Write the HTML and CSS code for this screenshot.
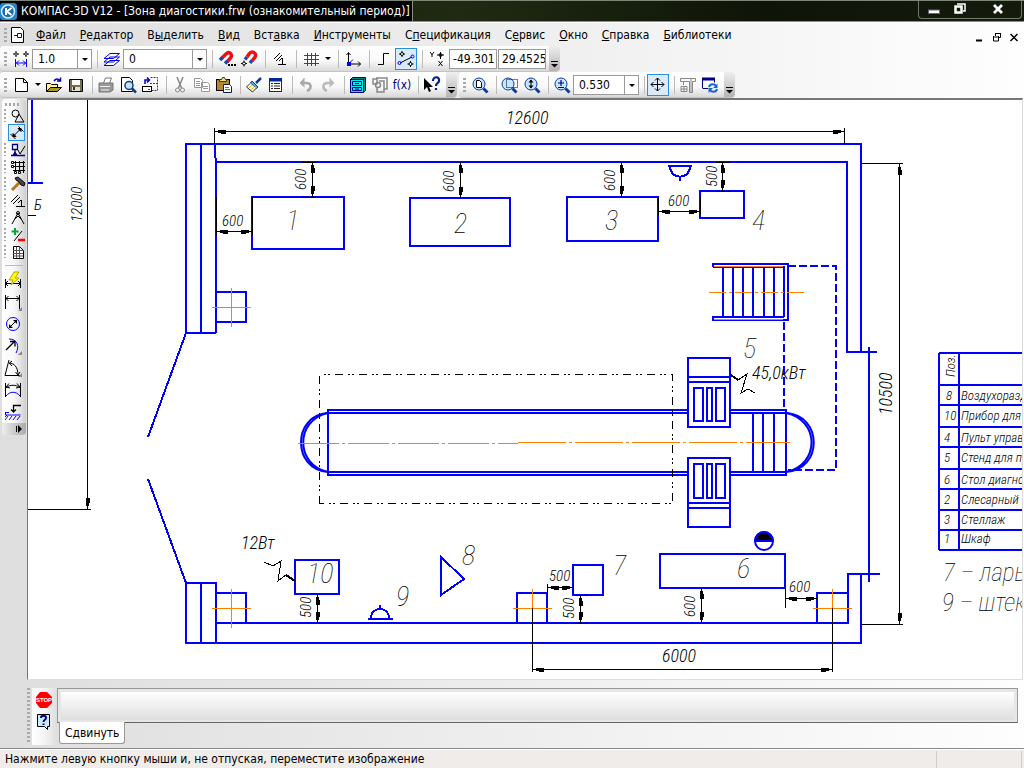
FILE: index.html
```html
<!DOCTYPE html>
<html lang="ru">
<head>
<meta charset="utf-8">
<title>КОМПАС-3D V12</title>
<link rel="stylesheet" href="styles.css">
</head>
<body>
<div class="app">
  <header class="titlebar">
    <div class="caption">
      <svg class="logo" width="17" height="17" viewBox="0 0 17 17"><rect width="17" height="17" rx="3" fill="#2484c6"/><circle cx="8" cy="8.500" r="6.500" fill="#1a6fb4" stroke="#d7efff" stroke-width="1.500"/><path d="M6 5v7M11.500 5L7 8.500l4.500 3.500" stroke="#fff" stroke-width="2" fill="none"/></svg>
      <h1>КОМПАС-3D V12 - [Зона диагостики.frw (ознакомительный период)]</h1>
    </div>
    <div class="winbtns">
      <button aria-label="Свернуть"><svg width="14" height="12"><rect x="1.500" y="7" width="11" height="3.500" fill="#fff" stroke="#667"/></svg></button>
      <button aria-label="Восстановить"><svg width="14" height="12"><path d="M4 1h8v7h-2" fill="none" stroke="#fff" stroke-width="1.500"/><rect x="2.500" y="3.500" width="6" height="6" fill="none" stroke="#fff" stroke-width="2.500"/></svg></button>
      <button aria-label="Закрыть"><svg width="14" height="12"><path d="M3 2l8 8M11 2l-8 8" stroke="#fff" stroke-width="2.800"/></svg></button>
    </div>
  </header>

  <nav class="menubar">
    <i class="grip"></i>
    <svg class="docicon" width="16" height="16" viewBox="0 0 16 16"><path d="M1.500 .5h9l3 3v12h-12z" fill="#fff" stroke="#000"/><path d="M4 8.500h3M7.500 6.500h4v4h-4z" fill="none" stroke="#00f"/></svg>
    <a href="#"><u>Ф</u>айл</a>
    <a href="#"><u>Р</u>едактор</a>
    <a href="#">В<u>ы</u>делить</a>
    <a href="#"><u>В</u>ид</a>
    <a href="#">Вст<u>а</u>вка</a>
    <a href="#"><u>И</u>нструменты</a>
    <a href="#">С<u>п</u>ецификация</a>
    <a href="#">С<u>е</u>рвис</a>
    <a href="#"><u>О</u>кно</a>
    <a href="#"><u>С</u>правка</a>
    <a href="#"><u>Б</u>иблиотеки</a>
    <div class="docbtns">
      <button aria-label="Свернуть документ"><svg width="10" height="10"><path d="M1 8.500h6" stroke="#000" stroke-width="2"/></svg></button>
      <button aria-label="Восстановить документ"><svg width="10" height="10"><path d="M3 1.500h6M3.500 1v3M8.500 1v4.500H6M1 5h6M1.500 4v5h5V4" fill="none" stroke="#000"/></svg></button>
      <button aria-label="Закрыть документ"><svg width="10" height="10"><path d="M1.500 2l7 7M8.500 2l-7 7" stroke="#000" stroke-width="1.500"/></svg></button>
    </div>
  </nav>

  <div class="bars">
    <div class="toolbar wide-sep">
      <i class="grip"></i>
      <button aria-label="Шаг курсора"><svg width="18" height="18"><path d="M1 4h6M4 1v6M11 4h6M14 1v6" stroke="#000"/><path d="M4 2.500L5.500 4 4 5.500 2.500 4zM14 2.500L15.500 4 14 5.500 12.500 4z" fill="#fff" stroke="#000"/><path d="M3.500 9v8M14.500 9v8M4 13h10M7 10.500L4.500 13 7 15.500M11 10.500l2.500 2.500-2.500 2.500" fill="none" stroke="#00f"/></svg></button>
      <span class="combo w60"><select aria-label="Шаг"><option>1.0</option></select><svg width="14" height="18"><path d="M4 8h6l-3 3z"/></svg></span>
      <i class="sep"></i>
      <button aria-label="Слои"><svg width="18" height="18" fill="#fff" stroke="#0000e0"><path d="M1 15.500h9.500l6-5H7zM1 12h9.500l6-5H7zM1 8.500h9.500l6-5H7z"/></svg></button>
      <span class="combo w84"><select aria-label="Слой"><option>0</option></select><svg width="14" height="18"><path d="M4 8h6l-3 3z"/></svg></span>
      <i class="sep"></i>
      <button aria-label="Привязки"><svg width="18" height="18"><path d="M4 8l4-4c3-3 7 0 4.500 4L9 12" fill="none" stroke="#e11" stroke-width="3.500"/><path d="M2 10l2.500-2.500M7 13.500l2.500-2.500" stroke="#1747b8" stroke-width="3.500"/><path d="M10 15h2m1 0h2m1 0h2" stroke="#000" stroke-width="2"/></svg></button>
      <button aria-label="Привязка"><svg width="18" height="18"><path d="M7 7l2-3c3-4 8-1 6 3l-3 4" fill="none" stroke="#e11" stroke-width="3.500"/><path d="M5 9.500L7 7M10 13l2-2.500" stroke="#1747b8" stroke-width="3.500"/><path d="M1 13.500h6M4 10.500v6" stroke="#000"/><circle cx="4" cy="13.500" r="1.500" fill="#fff" stroke="#000"/></svg></button>
      <i class="sep"></i>
      <button aria-label="Параллельность"><svg width="18" height="18" stroke="#000" fill="none"><path d="M3 9l6-6M5 11l6-6M7 14.500h8M11.500 14V8M8 11l3-3"/></svg></button>
      <i class="sep"></i>
      <button aria-label="Сетка"><svg width="18" height="18" stroke="#444"><path d="M5.500 3v13M9.500 3v13M13.500 3v13M2 5.500h15M2 9.500h15M2 13.500h15"/></svg></button>
      <button class="drop" aria-label="Параметры сетки"><svg width="8" height="8"><path d="M1 2h6L4 5z"/></svg></button>
      <i class="sep"></i>
      <button aria-label="Локальная СК"><svg width="18" height="18" fill="none"><path d="M4.500 3v11h12M2.500 5l2-2.500 2 2.500M14 11.500l2.500 2.500-2.500 2.500" stroke="#000"/><path d="M4.500 14L9 9.500" stroke="#00f"/><rect x="3" y="12" width="4" height="4" fill="#00f"/></svg></button>
      <i class="sep"></i>
      <button aria-label="Ортогонально"><svg width="18" height="18"><path d="M3 14.500h5.500v-11H14" fill="none" stroke="#000"/></svg></button>
      <button class="on" aria-label="Округление"><svg width="18" height="18" fill="none" stroke="#000"><path d="M5 1v6M2 4h6M13.500 11v6M10.500 14h6M3 13l12-6"/><circle cx="5" cy="4" r="1.500" fill="#fff"/><circle cx="13.500" cy="14" r="1.500" fill="#fff"/><circle cx="2.500" cy="13" r="1.500" stroke="#00f"/><circle cx="15.500" cy="6.500" r="1.500" stroke="#00f"/></svg></button>
      <i class="sep"></i>
      <button aria-label="Координаты"><svg width="18" height="18" stroke="#000" fill="none"><path d="M2 2l2 2.500L6 2M4 4v3M9 5h7M12.500 2v7M10.500 11l4 5M14.500 11l-4 5"/><circle cx="12.500" cy="5" r="1.500"/></svg></button>
      <input class="coord" aria-label="Y" value="-49.301"><input class="coord" aria-label="X" value="29.4525">
      <button class="cap" aria-label="Ещё"><svg width="8" height="8"><path d="M0 1.500h7" stroke="#000"/><path d="M0 4h7L3.500 7.500z"/></svg></button>
    </div>

    <div class="row">
    <div class="toolbar">
      <i class="grip"></i>
      <button aria-label="Создать"><svg width="18" height="18"><path d="M3.500 2.500h8l4 4v9h-12zM11.500 2.500v4h4" fill="#fff" stroke="#000"/></svg></button>
      <button class="drop" aria-label="Варианты"><svg width="8" height="8"><path d="M1 2h6L4 5z"/></svg></button>
      <button aria-label="Открыть"><svg width="18" height="18"><path d="M1.500 15.500v-8h4l1 1h6v3" fill="#ffef9c" stroke="#000"/><path d="M1.500 15.500l4-4h11l-4 4z" fill="#a69a20" stroke="#000"/><path d="M9 5c2-3 4-2.500 6-.5M15.500 1.500v3.500H12" fill="none" stroke="#00c" stroke-width="1.500"/></svg></button>
      <button aria-label="Сохранить"><svg width="18" height="18"><path d="M2.500 3.500h13v12h-13z" fill="#73724a" stroke="#000"/><rect x="5" y="4" width="8" height="5" fill="#fff"/><rect x="5" y="11" width="8" height="4" fill="#e4e0d0"/><rect x="6" y="11" width="2" height="3" fill="#333"/></svg></button>
      <i class="sep"></i>
      <button aria-label="Печать"><svg width="18" height="18"><path d="M6.500 7l2-5h6l-2 5" fill="#fff" stroke="#777"/><path d="M2 7h14v7l-3 2H2z" fill="#999" stroke="#777"/><path d="M3 10.500h10M4 14h8" stroke="#eee"/></svg></button>
      <button aria-label="Просмотр"><svg width="18" height="18"><path d="M2.500 1.500h8l3 3v11h-11z" fill="#fff" stroke="#000"/><circle cx="10" cy="9.500" r="4" fill="#bfe4ff" stroke="#123b8c" stroke-width="1.500"/><path d="M13 12.500l4 4" stroke="#123b8c" stroke-width="2.500"/></svg></button>
      <button aria-label="Импорт"><svg width="18" height="18" fill="none"><path d="M9.500 1.500h7v13h-7M9 7.500h8" stroke="#444" stroke-dasharray="2 1"/><rect x="1.500" y="10.500" width="9" height="5" fill="#fff" stroke="#000"/><path d="M4 8V4h4M6 1.500L8.500 4 6 6.500" stroke="#00c" stroke-width="1.500"/><path d="M7 13.500h2" stroke="#f00"/></svg></button>
      <i class="sep"></i>
      <button aria-label="Вырезать"><svg width="18" height="18" fill="none" stroke="#888"><path d="M6 1l4.500 11M12 1L7.500 12" stroke-width="1.500"/><circle cx="6.500" cy="14" r="2"/><circle cx="11.500" cy="14" r="2"/></svg></button>
      <button aria-label="Копировать"><svg width="18" height="18" fill="#fff" stroke="#999"><path d="M1.500 2.500h6l2 2v7h-8zM8.500 6.500h6l2 2v7h-8z"/><path d="M3 5.500h4M3 7.500h4M3 9.500h4M10 10.500h5M10 12.500h5"/></svg></button>
      <button aria-label="Вставить"><svg width="18" height="18"><rect x="1.500" y="3.500" width="13" height="11" fill="#b8862c" stroke="#000"/><path d="M4.500 5.500v-2h2l1-2h2l1 2h1v2z" fill="#eee06b" stroke="#333"/><path d="M8.500 8.500h6l2 2v6h-8z" fill="#fff" stroke="#123"/><path d="M10 11.500h4M10 13.500h5" stroke="#579"/></svg></button>
      <i class="sep"></i>
      <button aria-label="Копировать свойства"><svg width="18" height="18"><path d="M16 2l-5 5" stroke="#123b8c" stroke-width="2.500"/><path d="M7 5l6 6-1.500 1.500L5.500 7z" fill="#4caddf" stroke="#123b8c"/><path d="M5 7.500L1.500 11l6 5 4-4" fill="#fff7c2" stroke="#333"/><path d="M4 12l3-3M6 14l3-3" stroke="#d9b93c"/></svg></button>
      <button aria-label="Свойства"><svg width="18" height="18"><rect x="2.500" y="2.500" width="12" height="13" fill="#fff" stroke="#002a9a"/><path d="M2 4h13" stroke="#002a9a" stroke-width="3"/><path d="M4 7.500h2M4 10h2M4 12.500h2M7 7.500h6M7 10h6M7 12.500h6" stroke="#222"/></svg></button>
      <i class="sep"></i>
      <button aria-label="Отменить"><svg width="18" height="18" fill="none" stroke="#aaa" stroke-width="2.500"><path d="M4 7h5c6 0 6 6 1 8"/><path d="M7.500 2L3 7l4.500 4" fill="#aaa" stroke-width="1"/></svg></button>
      <button aria-label="Повторить"><svg width="18" height="18" fill="none" stroke="#bbb" stroke-width="2.500"><path d="M14 7H9c-6 0-6 6-1 8"/><path d="M10.500 2L15 7l-4.500 4" fill="#bbb" stroke-width="1"/></svg></button>
      <i class="sep"></i>
      <button aria-label="Менеджер библиотек"><svg width="18" height="18"><path d="M1.500 3.500l2-2h13v13l-2 2h-13z" fill="#088" stroke="#008"/><rect x="1.500" y="3.500" width="13" height="13" fill="#00e8f0" stroke="#008"/><path d="M3.500 5.500h9v4h-9zM3.500 11.500h9v3h-9zM6 7.500h4M6 13h4" fill="none" stroke="#008"/></svg></button>
      <button aria-label="Переменные"><svg width="18" height="18" fill="none" stroke="#888" stroke-width="1.500"><path d="M5 2h11v11h-3M8 5h5v11H6v-4M2 3h4v5H2z"/><circle cx="7" cy="9" r="2.500"/></svg></button>
      <button class="fx" aria-label="Функция">f(x)</button>
      <i class="sep"></i>
      <button aria-label="Справка"><svg width="20" height="20"><path d="M2 3v12l3-3 2 5 2-1-2-4h4z" fill="#000"/><path d="M11 6c0-5 7-5 6 0 0 2-3 2-3 5M14 13v2" fill="none" stroke="#0a1c96" stroke-width="2.200"/></svg></button>
      <button class="cap" aria-label="Ещё"><svg width="8" height="8"><path d="M0 1.500h7" stroke="#000"/><path d="M0 4h7L3.500 7.500z"/></svg></button>
    </div>
    <div class="toolbar">
      <i class="grip"></i>
      <button aria-label="Показать всё"><svg width="18" height="18"><circle cx="8" cy="8" r="6" fill="#c4e6ff" stroke="#123b9c"/><path d="M12.500 12.500l4 4" stroke="#123b9c" stroke-width="3"/><path d="M5.500 4.500h3l2 2v5h-5z" fill="#fff" stroke="#000"/></svg></button>
      <i class="sep"></i>
      <button aria-label="Увеличить рамкой"><svg width="18" height="18"><circle cx="7" cy="8" r="6" fill="#c4e6ff" stroke="#123b9c"/><path d="M11.500 12.500l4 4" stroke="#123b9c" stroke-width="3"/><rect x="5.500" y="3.500" width="11" height="8" fill="none" stroke="#000" stroke-dasharray="1 1"/></svg></button>
      <button aria-label="Масштаб"><svg width="18" height="18"><circle cx="8" cy="8" r="6" fill="#c4e6ff" stroke="#123b9c"/><path d="M12.500 12.500l4 4" stroke="#123b9c" stroke-width="3"/><path d="M8 4v8" stroke="#000"/><path d="M5.500 6.500h5L8 3.500zM5.500 9.500h5L8 12.500z"/></svg></button>
      <i class="sep"></i>
      <button aria-label="Увеличить"><svg width="18" height="18"><circle cx="8" cy="8" r="6" fill="#c4e6ff" stroke="#123b9c"/><path d="M12.500 12.500l4 4" stroke="#123b9c" stroke-width="3"/><path d="M5 7h6M8 4v6M5 11.500h6" stroke="#008" stroke-width="1.200"/></svg></button>
      <span class="combo w66"><select aria-label="Текущий масштаб"><option>0.530</option></select><svg width="14" height="18"><path d="M4 8h6l-3 3z"/></svg></span>
      <i class="sep"></i>
      <button class="on" aria-label="Сдвинуть"><svg width="18" height="18" fill="none" stroke="#000"><path d="M8.500 2v13M2 8.500h13M6 4.500l2.500-2.500L11 4.500M6 12.500L8.500 15l2.500-2.500M4.500 6L2 8.500 4.500 11M12.500 6L15 8.500 12.500 11"/></svg></button>
      <i class="sep"></i>
      <button aria-label="Перестроить"><svg width="18" height="18" fill="none" stroke="#888"><path d="M1.500 2.500h15v3h-3v11h-3v-11h-9zM4.500 5v4M2 10.500h6v5H2zM2 13h6M5 10v6M12 3v13"/></svg></button>
      <button aria-label="Обновить"><svg width="18" height="18" fill="none"><path d="M1.500 12.500v-10h12v4M2 12.500h5" stroke="#008"/><path d="M1 3h13" stroke="#008" stroke-width="3"/><path d="M8 11c1-4 6-3 7-1M16 13c-1 4-6 3-7 1" stroke="#1463e0" stroke-width="2"/><path d="M16.500 7.500V12H12zM7.500 17v-5H12z" fill="#1463e0"/></svg></button>
      <button class="cap" aria-label="Ещё"><svg width="8" height="8"><path d="M0 1.500h7" stroke="#000"/><path d="M0 4h7L3.500 7.500z"/></svg></button>
    </div>
    </div>
  </div>

  <main class="work">
    <aside class="side">
      <i class="hgrip"></i>
      <div class="modes">
        <button aria-label="Геометрия"><svg width="16" height="16" fill="none" stroke="#000"><circle cx="5.500" cy="5.500" r="3.500"/><path d="M9 6l5 8H5z"/></svg></button>
        <button class="on" aria-label="Размеры"><svg width="16" height="16" stroke="#000" fill="none"><path d="M4 11.500l8-8M1.500 9l5 5M9.500 1.500l5 5"/><path d="M4 11.500v-3l3 3zM12 3.500v3l-3-3z" fill="#000"/></svg></button>
        <button aria-label="Обозначения"><svg width="16" height="16" fill="none" stroke="#008" ><path d="M2.500 2.500h5v5h-5zM5 8v4M1 13.500h14" stroke-width="1.300"/><path d="M3 13l2-3 2 3z" fill="#008"/><path d="M8 8l2 4 5-8" stroke="#000"/></svg></button>
        <button aria-label="Параметризация"><svg width="16" height="16" fill="none" stroke="#000"><path d="M3 3.500h12M3 7.500h12M3 11.500h12M5.500 2v10M9.500 2v12M13.500 2v12"/><path d="M1.500 2.500h2v2h-2zM1.500 6.500h2v2h-2zM4.500 12.500h2v2h-2zM8.500 12.500h2v2h-2z" fill="#fff"/></svg></button>
        <button aria-label="Редактирование"><svg width="16" height="16"><path d="M2 14l8-8" stroke="#b87518" stroke-width="3"/><path d="M5 2l3-1 7 6-1 3-3-1-2-3-3-2z" fill="#444" stroke="#111"/></svg></button>
        <button aria-label="Параллельные"><svg width="16" height="16" fill="none" stroke="#000"><path d="M1 9l7-7M3 11l7-7M6 13.500h9M11.500 13V7M8 10l3-3"/></svg></button>
        <button aria-label="Измерения"><svg width="16" height="16" fill="none" stroke="#000"><path d="M2 14L8 3l6 11M5 9l3-3 3 3"/><circle cx="8" cy="3" r="1.500"/></svg></button>
        <button aria-label="Выделение"><svg width="16" height="16" fill="none"><path d="M5 1v7M1.500 4.500h7" stroke="#0a3" stroke-width="2"/><path d="M4 14l8-10" stroke="#000"/><path d="M8 13h7" stroke="#f00" stroke-width="2.500"/></svg></button>
        <button aria-label="Спецификация"><svg width="16" height="16" fill="#fff" stroke="#000"><path d="M3.500 2.500h6l4 4v8h-10z"/><path d="M3 6.500h10M3 9.500h10M3 12h10M6.500 3v11M9.500 3v11" stroke="#555"/></svg></button>
      </div>
      <i class="hsep"></i>
      <div class="tools">
        <button aria-label="Авторазмер"><svg width="18" height="18" fill="none" stroke="#000"><path d="M1.500 8v9M16.500 8v9M2 12.500h14M4 10l-2.500 2.500L4 15M14 10l2.500 2.500L14 15"/><path d="M10 1L5 9h4l-2 5 8-7h-4l4-6z" fill="#ff0" stroke="#b9a500"/></svg></button>
        <button aria-label="Линейный размер"><svg width="18" height="18" fill="none" stroke="#000"><path d="M1.500 2v14M15.500 2v14M2 5.500h13M4.500 3L2 5.500 4.500 8M12.500 3L15 5.500 12.500 8"/><path d="M14 18h4v-4z" fill="#888" stroke="none"/></svg></button>
        <button aria-label="Диаметральный размер"><svg width="18" height="18" fill="none"><circle cx="9" cy="9" r="6.500" stroke="#00f"/><path d="M5 13l8-8" stroke="#000"/><path d="M5 13v-4l4 4zM13 5v4l-4-4z" fill="#000"/></svg></button>
        <button aria-label="Радиальный размер"><svg width="18" height="18" fill="none"><path d="M5 2c8 0 11 7 7 14" stroke="#00f"/><path d="M2 13l8-8M6 4.500h5v5" stroke="#000" stroke-width="1.300"/><path d="M14 18h4v-4z" fill="#888"/></svg></button>
        <button aria-label="Угловой размер"><svg width="18" height="18" fill="none" stroke="#000"><path d="M5 1L1 16.500h16M5 4c5 0 9 4 9 12M8 2L5.500 4 8 7M11.500 13l2.500 3 2-3"/><path d="M14 18h4v-4z" fill="#888" stroke="none"/></svg></button>
        <button aria-label="Размер дуги"><svg width="18" height="18" fill="none" stroke="#000"><path d="M1.500 2v14M16.500 2v14M2 6.500c4-3 10-3 14 0M5 2.500L2 6l4 1M13 2.500L16 6l-4 1"/><path d="M2 15c4-5 10-5 14 0" stroke="#00f"/></svg></button>
        <button aria-label="Размер высоты"><svg width="18" height="18" fill="none"><path d="M17 2.500H9.500V9M7 6.500L9.500 9 12 6.500" stroke="#000" stroke-width="1.300"/><path d="M1.500 9v3h15M1 9.500h4M1 17l3-4M5 17l3-4M9 17l3-4M13 17l3-4M1 14l2-2" stroke="#00f"/></svg></button>
      </div>
      <button class="sidecap" aria-label="Развернуть"><svg width="8" height="8"><path d="M1.500 1v6" stroke="#000"/><path d="M3 0l4 4-4 4z"/></svg></button>
    </aside>

    <section class="canvas">
      <svg class="drawing" width="100%" height="100%">
        <defs>
          <marker id="a" markerUnits="userSpaceOnUse" markerWidth="12" markerHeight="6" refX="11" refY="3" orient="auto-start-reverse"><path d="M0 1L5 1L11 3L5 5L0 5z"/></marker>
        </defs>
        <g transform="translate(-28 -100)">
          <g class="blue">
            <path d="M216 333H186V144H861V352M201 144V333M215 144V154L216 162V333M216 162H847V352H877M869 347V582M880 574H848V623H216V583H186V643H861V574M201 583V643M216 623V643M28 183H43M32 100V184"/>
            <path d="M186 333L148 437M148 479L186 583"/>
            <path d="M216 292H246V322H216M216 593H246V623M517 623V593H547V623M817 623V593H847"/>
            <path d="M252 197H344V249H252zM410 198H510V246H410zM567 197H658V241H567zM700 191H744V218H700zM660 554H785V588H660zM573 565H603V595H573zM295 560H339V594H295zM441 557L464 579L441 595z"/>
            <path d="M668 166H692M670 167C671 180 689 180 690 167M680 176V181M368 619H393M371 618C371 606 389 606 389 618M380 605V609"/>
            <path d="M688 410H328V475H688M328 413H688M328 472H688M730 410H786V475H730M730 413H786M730 472H786M753 413V472M763 413V472M774 413V472"/>
            <path d="M688 358H730V427H688zM688 377H730M688 382H730M694 388H703V421H694zM707 388H712V421H707zM716 388H725V421H716zM688 458H730V527H688zM694 464H703V498H694zM707 464H712V498H707zM716 464H725V498H716zM688 503H730M688 508H730"/>
            <path d="M713 267V264H788V320H713V317H784M713 267H784V317M723 267V317M733 267V317M743 267V317M753 267V317M764 267V317M774 267V317"/>
            <path stroke-dasharray="8 3" d="M788 266H836V470H788M784 322V410"/>
            <path d="M939 353H1400M939 385H1400M939 405H1400M939 427H1400M939 447H1400M939 469H1400M939 489H1400M939 510H1400M939 530H1400M939 550H1400M939 353V550M959 353V550"/>
          </g>
          <g class="arc">
            <path d="M328 413C292 415 292 470 328 472M328 413C295 420 295 465 328 472M786 413C823 415 823 470 786 472M786 413C820 420 820 465 786 472"/>
            <path d="M755 541A9 9 0 0 1 773 541z" fill="#000"/><circle cx="764" cy="541" r="9"/>
          </g>
          <g class="orange">
            <path d="M212 307.500H251M231.500 288V327M212 608.500H251M231.500 589V628M513 608.500H552M532.500 589V608M813 608.500H852M832.500 589V608M714 266.500H783M714 319.500H783"/>
            <path stroke-dasharray="41 3 3 3" d="M298 443.500H518"/><path stroke-dasharray="48 3 3 3" d="M518 442.500H790"/><path stroke-dasharray="17 3 3 3" d="M709 292.500H806"/>
          </g>
          <path class="thin" stroke-dasharray="8 5 2 2 2 5" d="M319.500 503.500V374.500H672.500V503.500H319.500"/>
          <g class="thin">
            <path d="M214.500 128V144M844.500 128V144M861 163.500H903M861 624.500H903M532.500 608V672M832.500 608V672M28 509.500H91M28 215.500H36M216.500 197V235M252.500 197V235M302 162.500H316M302 197.500H316M658.500 197V215M700.500 197V215M716 162.500H730M716 191.500H730M785.500 588V608M547.500 584V595M573.500 584V595M575 595.500H588M575 623.500H588"/>
            <g marker-start="url(#a)" marker-end="url(#a)">
              <path d="M215 131.500H844"/><path d="M899.500 164V624"/><path d="M533 669.500H832"/>
              <path d="M312.500 162V197"/><path d="M460.500 162V198"/><path d="M621.500 162V197"/><path d="M722.500 162V191"/>
              <path d="M217 231.500H252"/><path d="M659 211.500H700"/><path d="M701.500 588V623"/><path d="M786 598.500H817"/><path d="M548 587.500H573"/><path d="M580.500 595V623"/><path d="M317.500 594V623"/>
            </g>
            <path marker-end="url(#a)" d="M87.500 100V509"/>
          </g>
          <g class="leader"><path d="M738 380L747 374L741 393L748 389L755 393M264 562L273 566L281 561L278 581L286 575"/><path stroke-width="2" d="M731 375L738 380M286 575L295 581"/></g>

          <g class="t18"><text x="506" y="124">12600</text><text x="662" y="662">6000</text><text x="752" y="379">45,0кВт</text><text x="241" y="549">12Вт</text><text transform="translate(892 415) rotate(-90)">10500</text></g>
          <g class="t15">
            <text x="222" y="226">600</text><text x="668" y="206">600</text><text x="789" y="592">600</text><text x="549" y="581">500</text><text x="34" y="210">Б</text>
            <text transform="translate(306 190) rotate(-90)">600</text><text transform="translate(454 192) rotate(-90)">600</text><text transform="translate(615 191) rotate(-90)">600</text><text transform="translate(717 187) rotate(-90)">500</text><text transform="translate(695 617) rotate(-90)">600</text><text transform="translate(574 619) rotate(-90)">500</text><text transform="translate(311 618) rotate(-90)">500</text><text transform="translate(82 222) rotate(-90)">12000</text>
          </g>
          <g class="t28">
            <text x="286" y="230">1</text><text x="454" y="233">2</text><text x="605" y="230">3</text><text x="752" y="230">4</text><text x="743" y="358">5</text><text x="737" y="578">6</text><text x="613" y="575">7</text><text x="462" y="565">8</text><text x="396" y="606">9</text><text x="307" y="583">10</text>
          </g>
          <g class="t25"><text x="943" y="581">7 – ларь</text><text x="942" y="611">9 – штекер</text></g>
          <g class="t13">
            <text transform="translate(955 377) rotate(-90)">Поз.</text>
            <text x="946" y="400">8</text><text x="961" y="400">Воздухораздаточная</text>
            <text x="944" y="420">10</text><text x="961" y="420">Прибор для проверки</text>
            <text x="944" y="442">4</text><text x="961" y="442">Пульт управления</text>
            <text x="944" y="462">5</text><text x="961" y="462">Стенд для проверки</text>
            <text x="944" y="484">6</text><text x="961" y="484">Стол диагноста</text>
            <text x="944" y="504">2</text><text x="961" y="504">Слесарный верстак</text>
            <text x="944" y="524">3</text><text x="961" y="524">Стеллаж</text>
            <text x="944" y="543">1</text><text x="961" y="543">Шкаф</text>
          </g>
        </g>
      </svg>
    </section>
  </main>

  <section class="props">
    <i class="grip"></i>
    <div class="actions">
      <button aria-label="Стоп"><svg width="18" height="18"><path d="M5 1h7l5 5v6l-5 5H5l-4-5V6z" fill="#f00"/><text x="9" y="11" text-anchor="middle" class="stop">STOP</text></svg></button>
      <button aria-label="Справка"><svg width="16" height="18"><path d="M1.500 1.500h12v12h-2v3l-3-3h-7z" fill="#cdeaff" stroke="#000"/><path d="M5 5c0-3 5-3 5 0 0 2-2.500 1.500-2.500 4M7.500 10.500v1.500" fill="none" stroke="#008" stroke-width="2"/></svg></button>
    </div>
    <div class="panel"><div class="field"><div class="fill"></div></div><button class="tab">Сдвинуть</button></div>
  </section>

  <footer class="status"><p>Нажмите левую кнопку мыши и, не отпуская, переместите изображение</p><span></span></footer>
</div>
</body>
</html>
```

FILE: styles.css
```css
* { box-sizing: border-box; }
body { margin: 0; font: 12px/16px "DejaVu Sans Condensed", "Noto Sans", sans-serif; color: #000; }
button { display: grid; place-items: center; padding: 0; border: 0; background: none; font: inherit; color: inherit; }
svg { display: block; }
.app { display: flex; flex-direction: column; height: 100vh; overflow: hidden; background: linear-gradient(90deg, #dedede, #fefefe); }

.titlebar { display: flex; justify-content: space-between; height: 22px; background: linear-gradient(90deg, #10180b, #202a12 45%, #0e1408 75%, #141a0c); border-top: 1px solid #7c8777; border-bottom: 1px solid #8b9085; }
.caption { display: flex; align-items: center; gap: 4px; padding-right: 2px; background: #000; border-right: 1px solid #889080; }
h1 { margin: 0; font-size: 12px; line-height: 18px; font-weight: normal; color: #fff; white-space: nowrap; }
.winbtns { display: flex; height: 18px; margin-right: 2px; padding: 0 16px 2px 8px; gap: 12px; border: 1px solid #70786b; border-top: 0; border-radius: 0 0 4px 4px; }
.winbtns button:last-child { margin-left: 12px; }

.menubar { display: flex; align-items: center; gap: 14px; height: 24px; flex: none; padding: 0 4px; border-top: 1px solid #fff; }
.menubar .grip { margin-right: -11px; }
.docicon { margin-right: -4px; }
.menubar a { color: #000; text-decoration: none; white-space: nowrap; }
.docbtns { display: flex; gap: 7px; margin-left: auto; padding: 4px 1px 0 0; }

.grip { flex: none; width: 3px; height: 14px; background: repeating-linear-gradient(#a9a9a9 0 2px, transparent 2px 4px); }
.bars { flex: none; }
.row { display: flex; gap: 2px; }
.toolbar { display: flex; align-items: center; width: max-content; height: 26px; padding-left: 4px; border-radius: 4px; background: linear-gradient(#fff, #f8f8f8 60%, #d9d9d9); border-bottom: 1px solid #c4c4c4; --sep: 8px; }
.wide-sep { --sep: 9px; }
.toolbar .grip { margin-right: 3px; }
.toolbar > button { width: 22px; height: 22px; }
.toolbar > .drop { width: 11px; }
.sep { flex: none; width: var(--sep); height: 18px; background: linear-gradient(#bbb, #bbb) 5px 0 / 1px 100% no-repeat; }
.toolbar > .on, .modes .on { background: #d9ebfb; border: 1px solid #2b8de0; }
.toolbar > .cap { width: 11px; height: 25px; margin-left: 3px; place-items: end center; padding-bottom: 3px; border-radius: 0 4px 4px 0; background: linear-gradient(#eee, #b4b4b4); }
.toolbar > .fx { color: #00007c; }
.combo { display: grid; height: 20px; border: 1px solid #9a9a9a; background: #fff; }
.combo > * { grid-area: 1 / 1; }
.combo select { appearance: none; width: 100%; height: 18px; border: 0; padding: 0 5px; background: none; font: 12px/18px "DejaVu Sans Condensed", "Noto Sans", sans-serif; color: #000; }
.combo svg { justify-self: end; border-left: 1px solid #9a9a9a; pointer-events: none; }
.w60 { width: 60px; }
.w66 { width: 66px; }
.w84 { width: 84px; }
.coord { width: 48px; height: 20px; margin-left: 1px; padding: 0 0 0 3px; border: 1px solid #9a9a9a; background: #fff; font: 12px/18px "DejaVu Sans Condensed", "Noto Sans", sans-serif; color: #000; }

.work { display: flex; flex: 1; min-height: 0; padding-bottom: 4px; }
.side { flex: none; width: 24px; margin: 1px 1px 0 2px; align-self: flex-start; border-radius: 4px; background: linear-gradient(90deg, #fff, #f8f8f8 50%, #cfcfcf); }
.hgrip { display: block; width: 15px; height: 3px; margin: 4px 3px 1px; background: repeating-linear-gradient(90deg, #a9a9a9 0 2px, transparent 2px 4px); }
.modes { padding-left: 2px; }
.modes button { width: 22px; height: 17px; padding-left: 5px; background: repeating-linear-gradient(#a9a9a9 0 2px, transparent 2px 4px) 0 2px / 2px 13px no-repeat; }
.modes .on { width: 17px; margin-left: 4px; padding: 0; background: #d9ebfb; }
.hsep { display: block; height: 1px; margin: 5px 3px 3px; background: #bbb; }
.tools button { width: 22px; height: 22px; }
.sidecap { width: 24px; height: 12px; place-items: center end; padding-right: 3px; background: linear-gradient(90deg, #eee, #aaa); border-radius: 0 0 4px 4px; }
.canvas { flex: 1; min-width: 0; margin-right: 1px; background: #fff; border: 1px solid #dedede; border-top: 2px solid #777; border-left-color: #777; overflow: hidden; }

.drawing { shape-rendering: crispEdges; fill: none; }
.blue, .arc { stroke: #00f; stroke-width: 2; }
.arc { shape-rendering: auto; }
.orange { stroke: #ff8000; stroke-width: 1; }
.thin, .leader { stroke: #000; stroke-width: 1; }
marker path { fill: #000; stroke: none; }
.drawing text { fill: #000; font-family: "Liberation Sans Narrow", "Roboto Condensed", "Liberation Sans", sans-serif; font-style: italic; font-weight: 300; }
.t13 text { font-size: 13px; }
.t15 text { font-size: 15px; }
.t18 text { font-size: 18px; }
.t25 text { font-size: 25px; font-weight: 100; }
.t28 text { font-size: 28px; font-weight: 100; }

.props { display: flex; flex: none; height: 64px; padding: 4px 6px 3px 27px; }
.props .grip { height: 54px; margin-right: 2px; }
.actions { width: 25px; padding-top: 1px; background: linear-gradient(90deg, #fff, #f4f4f4 50%, #ddd); }
.actions button { width: 24px; height: 22px; }
.stop { font: bold 6px "Liberation Sans", sans-serif; fill: #fff; }
.panel { flex: 1; }
.field { height: 35px; padding: 3px; background: #e6e6e6; border: 1px solid #999; border-bottom-color: #666; }
.fill { height: 28px; background: linear-gradient(#fff, #dedede); }
.tab { height: 22px; margin: -1px 0 0 2px; padding: 0 5px; position: relative; background: #fff; border: 1px solid #999; border-top: 0; border-radius: 0 0 3px 3px; }
.status { display: flex; flex: none; height: 20px; padding: 2px 2px 0 5px; background: #f0ecea; border-top: 1px solid #888; box-shadow: inset 0 1px #fff; }
.status p { flex: 1; margin: 0; white-space: nowrap; }
.status span { width: 86px; border: 1px solid #d0cccb; border-width: 0 1px; }
```
